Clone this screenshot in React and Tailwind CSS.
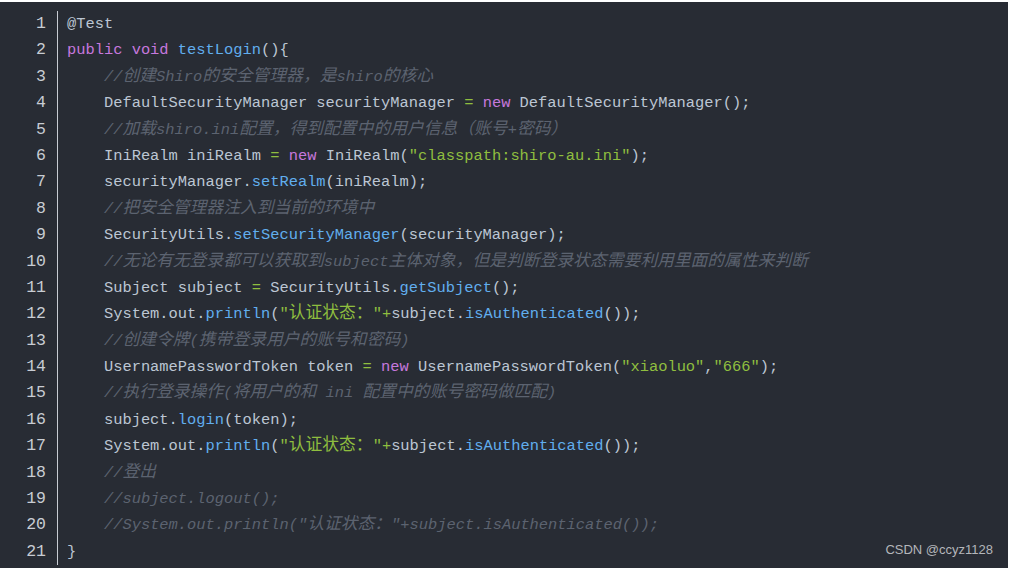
import React from "react";

const C = {
  p: "text-[#bcc6d3]",
  k: "text-[#c678dd]",
  f: "text-[#61aeee]",
  s: "text-[#8fbe3f]",
  o: "text-[#8fbe3f]",
  c: "text-[#5c6370] italic",
};

const IND = "    ";
const AUTH = [["p", IND + "System.out."], ["f", "println"], ["p", "("], ["s", "\"认证状态：\""], ["o", "+"], ["p", "subject."], ["f", "isAuthenticated"], ["p", "());"]];

const lines = [
  [["p", "@Test"]],
  [["k", "public void "], ["f", "testLogin"], ["p", "(){"]],
  [["p", IND], ["c", "//创建Shiro的安全管理器，是shiro的核心"]],
  [["p", IND + "DefaultSecurityManager securityManager "], ["o", "="], ["p", " "], ["k", "new"], ["p", " DefaultSecurityManager();"]],
  [["p", IND], ["c", "//加载shiro.ini配置，得到配置中的用户信息（账号+密码）"]],
  [["p", IND + "IniRealm iniRealm "], ["o", "="], ["p", " "], ["k", "new"], ["p", " IniRealm("], ["s", "\"classpath:shiro-au.ini\""], ["p", ");"]],
  [["p", IND + "securityManager."], ["f", "setRealm"], ["p", "(iniRealm);"]],
  [["p", IND], ["c", "//把安全管理器注入到当前的环境中"]],
  [["p", IND + "SecurityUtils."], ["f", "setSecurityManager"], ["p", "(securityManager);"]],
  [["p", IND], ["c", "//无论有无登录都可以获取到subject主体对象，但是判断登录状态需要利用里面的属性来判断"]],
  [["p", IND + "Subject subject "], ["o", "="], ["p", " SecurityUtils."], ["f", "getSubject"], ["p", "();"]],
  AUTH,
  [["p", IND], ["c", "//创建令牌(携带登录用户的账号和密码)"]],
  [["p", IND + "UsernamePasswordToken token "], ["o", "="], ["p", " "], ["k", "new"], ["p", " UsernamePasswordToken("], ["s", "\"xiaoluo\""], ["p", ","], ["s", "\"666\""], ["p", ");"]],
  [["p", IND], ["c", "//执行登录操作(将用户的和 ini 配置中的账号密码做匹配)"]],
  [["p", IND + "subject."], ["f", "login"], ["p", "(token);"]],
  AUTH,
  [["p", IND], ["c", "//登出"]],
  [["p", IND], ["c", "//subject.logout();"]],
  [["p", IND], ["c", "//System.out.println(\"认证状态：\"+subject.isAuthenticated());"]],
  [["p", "}"]],
];

// CJK runs get their own (wider) font so widths line up with the original
const Text = ({ text }) => {
  const parts = text.split(/([\u3000-\u303f\u4e00-\u9fff\uff00-\uffef]+)/);
  return parts.map((t, i) =>
    i % 2 === 1 ? (
      <span key={i} className="text-[16.8px] leading-none font-['Noto_Sans_CJK_SC',sans-serif]">
        {t}
      </span>
    ) : (
      t
    )
  );
};

export default function App() {
  return (
    <div className="w-[1009px] h-[568px] bg-white pt-[2px] pr-[1px] overflow-hidden">
      <div className="relative h-full bg-[#282c34] pt-[9px] font-['Liberation_Mono',monospace] text-[15.4px]">
        <div className="flex">
          {/* line numbers */}
          <div className="w-[58px] border-r border-[#c8ccd3] pr-[11px] text-right text-[16.5px] text-[#c8ccd3]">
            {lines.map((_, i) => (
              <div key={i} className="h-[26.4px] leading-[26.4px]">
                {i + 1}
              </div>
            ))}
          </div>
          {/* code */}
          <div className="pl-[9px] whitespace-pre">
            {lines.map((toks, i) => (
              <div key={i} className="h-[26.4px] leading-[26.4px]">
                {toks.map(([t, s], j) => (
                  <span key={j} className={C[t]}>
                    <Text text={s} />
                  </span>
                ))}
              </div>
            ))}
          </div>
        </div>
        <div className="absolute right-[15px] bottom-[9px] font-['Liberation_Sans',sans-serif] text-[13px] text-[#b4b6ba]">
          CSDN @ccyz1128
        </div>
      </div>
    </div>
  );
}
